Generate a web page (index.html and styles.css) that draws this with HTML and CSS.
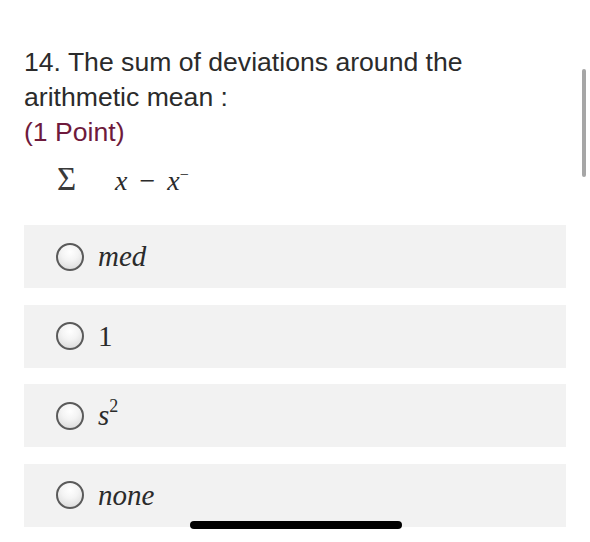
FILE: index.html
```html
<!DOCTYPE html>
<html>
<head>
<meta charset="utf-8">
<link rel="stylesheet" href="styles.css">
</head>
<body>
<div class="page">
  <div class="question">
    <div class="title">14. The sum of deviations around the arithmetic mean :</div>
    <div class="points">(1 Point)</div>
    <div class="formula"><span class="sigma">Σ</span><span class="expr"><i>x</i> − <i>x</i><sup>−</sup></span></div>
  </div>
  <div class="options">
    <label class="option"><span class="radio"></span><span class="opt-text"><i>med</i></span></label>
    <label class="option"><span class="radio"></span><span class="opt-text">1</span></label>
    <label class="option"><span class="radio"></span><span class="opt-text"><i>s</i><sup class="sq">2</sup></span></label>
    <label class="option"><span class="radio"></span><span class="opt-text"><i>none</i></span></label>
  </div>
  <div class="scrollbar"></div>
  <div class="home-indicator"></div>
</div>
</body>
</html>
```

FILE: styles.css
```css
html, body {
  margin: 0;
  padding: 0;
  background: #ffffff;
}
.page {
  position: relative;
  width: 590px;
  height: 542px;
  overflow: hidden;
  font-family: "Liberation Sans", Arial, sans-serif;
}
.question {
  padding: 45px 24px 0 24px;
}
.title {
  font-size: 26.6px;
  line-height: 35px;
  color: #2b2b2b;
  width: 460px;
}
.points {
  font-size: 26.6px;
  line-height: 35px;
  color: #6e1a3c;
}
.formula {
  display: flex;
  align-items: baseline;
  font-family: "Liberation Serif", "Times New Roman", serif;
  color: #2b2b2b;
  padding-left: 33px;
  margin-top: 4px;
  height: 50px;
  line-height: 50px;
}
.sigma {
  font-size: 33px;
  width: 58px;
  color: #3a3a3a;
}
.expr {
  font-size: 28px;
  word-spacing: 5px;
}
.expr i {
  font-style: italic;
}
.expr sup {
  font-size: 16px;
  vertical-align: 10px;
  line-height: 0;
}
.options {
  display: flex;
  flex-direction: column;
  gap: 16.5px;
  padding: 0 24px;
  margin-top: 21px;
}
.option {
  display: flex;
  align-items: center;
  height: 63px;
  background: #f2f2f2;
  padding-left: 32px;
}
.radio {
  box-sizing: border-box;
  width: 28px;
  height: 28px;
  border-radius: 50%;
  border: 2px solid #5a5a5a;
  background: radial-gradient(circle at 50% 30%, #ffffff 0%, #f4f4f4 40%, #d4d4d4 100%);
  flex: none;
}
.opt-text {
  margin-left: 14px;
  font-family: "Liberation Serif", "Times New Roman", serif;
  font-size: 29px;
  color: #2b2b2b;
  line-height: 1;
}
.opt-text .sq {
  font-size: 18px;
  vertical-align: 13px;
  line-height: 0;
}
.scrollbar {
  position: absolute;
  left: 582px;
  top: 69px;
  width: 4px;
  height: 108px;
  border-radius: 2px;
  background: #a6a6a6;
}
.home-indicator {
  position: absolute;
  left: 190px;
  top: 521px;
  width: 212px;
  height: 8px;
  border-radius: 4px;
  background: #000000;
}
```
